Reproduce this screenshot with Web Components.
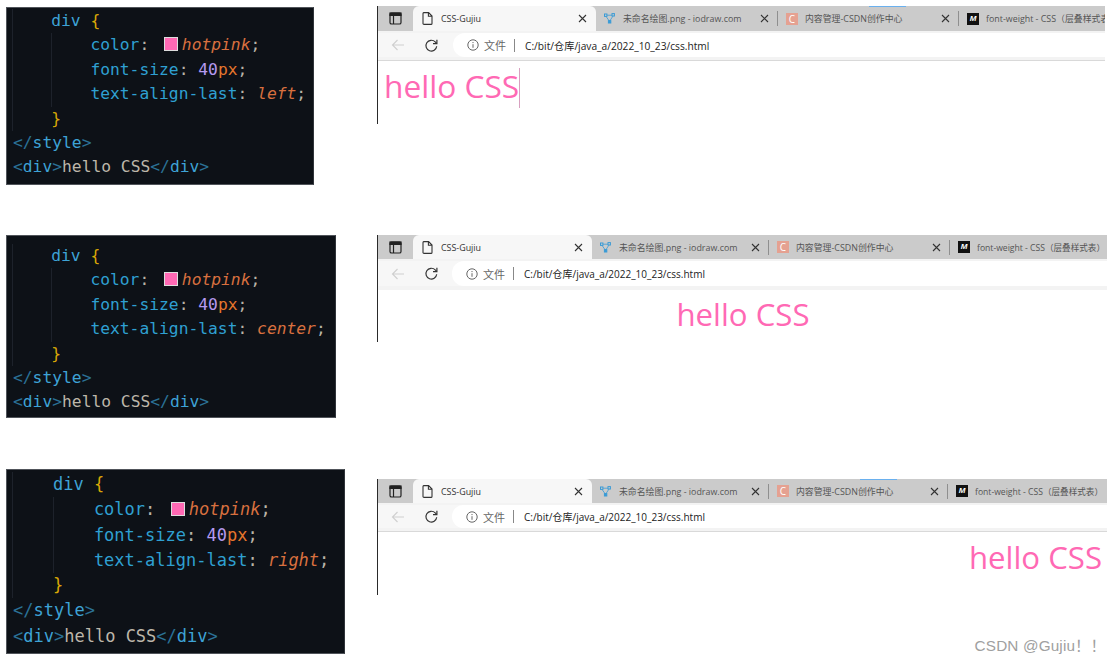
<!DOCTYPE html>
<html lang="zh">
<head>
<meta charset="utf-8">
<title>text-align-last</title>
<style>
  html, body { margin: 0; padding: 0; background: #fff; }
  body { width: 1117px; height: 665px; overflow: hidden; position: relative; }
</style>
</head>
<body>
<demo-row style="--row-h:235px;--pad:6px;--code-top:1px;--win-top:0px">
  <code-panel slot="code" value="left" style="--w:308px;--h:178px;--fs:16.3px;--lh:24.4px;--top:1px"></code-panel>
  <browser-window slot="win" style="--w:728px;--h:118px;--strip:25px;--bar:29px;--line:#d9d9d9;--pill-left:75px;--url:10.2px">
    <browser-tab slot="tabs" active icon="doc" style="--tw:183px">CSS-Gujiu</browser-tab>
    <browser-tab slot="tabs" icon="graph" sep style="--tw:182px">未命名绘图.png - iodraw.com</browser-tab>
    <browser-tab slot="tabs" icon="c" sep style="--tw:181px">内容管理-CSDN创作中心</browser-tab>
    <browser-tab slot="tabs" icon="m" style="--tw:147px">font-weight - CSS（层叠样式表）</browser-tab>
    <page-text align="left" caret style="--text-top:3px;--hello:31.7px">hello CSS</page-text>
    <load-bar slot="over" style="--x:491px"></load-bar>
  </browser-window>
</demo-row>
<demo-row style="--row-h:234px;--pad:0px;--code-top:0px;--win-top:0px">
  <code-panel slot="code" value="center" style="--w:330px;--h:183px;--fs:16.3px;--lh:24.4px;--top:8px"></code-panel>
  <browser-window slot="win" style="--w:730px;--h:107px;--strip:24px;--bar:30px;--line:#f3f3f3;--pill-left:74px;--url:10px">
    <browser-tab slot="tabs" active icon="doc" style="--tw:179px">CSS-Gujiu</browser-tab>
    <browser-tab slot="tabs" icon="graph" sep style="--tw:177px">未命名绘图.png - iodraw.com</browser-tab>
    <browser-tab slot="tabs" icon="c" sep style="--tw:181px">内容管理-CSDN创作中心</browser-tab>
    <browser-tab slot="tabs" icon="m" style="--tw:158px;font-size:8.6px">font-weight - CSS（层叠样式表）</browser-tab>
    <page-text align="center" style="--text-top:2px;--hello:31.2px">hello CSS</page-text>
  </browser-window>
</demo-row>
<demo-row style="--row-h:196px;--pad:0px;--code-top:0px;--win-top:10px">
  <code-panel slot="code" value="right" style="--w:339px;--h:185px;--fs:17px;--lh:25.3px;--top:2px"></code-panel>
  <browser-window slot="win" style="--w:730px;--h:116px;--strip:24px;--bar:28px;--line:#d9d9d9;--pill-left:74px;--url:10px">
    <browser-tab slot="tabs" active icon="doc" style="--tw:179px">CSS-Gujiu</browser-tab>
    <browser-tab slot="tabs" icon="graph" sep style="--tw:177px">未命名绘图.png - iodraw.com</browser-tab>
    <browser-tab slot="tabs" icon="c" sep style="--tw:179px">内容管理-CSDN创作中心</browser-tab>
    <browser-tab slot="tabs" icon="m" style="--tw:160px;font-size:8.6px">font-weight - CSS（层叠样式表）</browser-tab>
    <page-text align="right" style="--text-top:3px;--hello:31.2px">hello CSS</page-text>
    <load-bar slot="over" style="--x:482px"></load-bar>
  </browser-window>
</demo-row>
<csdn-mark>CSDN @Gujiu！！</csdn-mark>

<script>
const UI_FONT = `"Open Sans", "Noto Sans CJK SC", sans-serif`;

class DemoRow extends HTMLElement {
  constructor() {
    super();
    this.attachShadow({ mode: 'open' }).innerHTML = `
      <style>
        :host {
          display: grid;
          grid-template-columns: 377px 1fr;
          align-items: start;
          height: var(--row-h);
          padding-top: var(--pad);
          box-sizing: border-box;
        }
        .code { padding: var(--code-top) 0 0 6px; }
        .win { padding-top: var(--win-top); }
      </style>
      <div class="code"><slot name="code"></slot></div>
      <div class="win"><slot name="win"></slot></div>
    `;
  }
}

class CodePanel extends HTMLElement {
  constructor() {
    super();
    this.attachShadow({ mode: 'open' });
  }

  connectedCallback() {
    const value = this.getAttribute('value');
    this.shadowRoot.innerHTML = `
      <style>
        :host {
          display: block;
          box-sizing: border-box;
          width: var(--w);
          height: var(--h);
          padding: var(--top) 0 0 6px;
          background: #0d1117;
          border: 1px solid #50545a;
          border-right-color: #30343a;
          font: var(--fs)/var(--lh) "DejaVu Sans Mono", monospace;
          color: #bdb7aa;
          overflow: hidden;
        }
        .outer { border-left: 1px solid #1d222b; margin-left: -1px; }
        .outer > .ln { padding-left: calc(4ch - 1px); }
        .inner { margin-left: calc(4ch - 1px); border-left: 1px solid #1d222b; }
        .inner > .ln { padding-left: calc(4ch - 1px); }
        .ln { height: var(--lh); white-space: pre; }
        .tag { color: #3ea3d6; }
        .dim { color: #2b7196; }
        .prop { color: #2fa0d2; }
        .p { color: #b9b4a8; }
        .brace { color: #d9a706; }
        .val { color: #d8703f; font-style: italic; }
        .num { color: #b59af0; }
        .unit { color: #e5762c; }
        .swatch {
          display: inline-block;
          width: 12px;
          height: 12px;
          margin: 0 -6px 0 5px;
          background: hotpink;
          border: 1px solid #ddd;
          vertical-align: -1px;
        }
      </style>
      <div class="outer">
        <div class="ln"><span class="tag">div</span> <span class="brace">{</span></div>
        <div class="inner">
          <div class="ln"><span class="prop">color</span><span class="p">:</span> <span class="swatch"></span> <span class="val">hotpink</span><span class="p">;</span></div>
          <div class="ln"><span class="prop">font-size</span><span class="p">:</span> <span class="num">40</span><span class="unit">px</span><span class="p">;</span></div>
          <div class="ln"><span class="prop">text-align-last</span><span class="p">:</span> <span class="val">${value}</span><span class="p">;</span></div>
        </div>
        <div class="ln"><span class="brace">}</span></div>
      </div>
      <div class="ln"><span class="dim">&lt;/</span><span class="tag">style</span><span class="dim">&gt;</span></div>
      <div class="ln"><span class="dim">&lt;</span><span class="tag">div</span><span class="dim">&gt;</span>hello CSS<span class="dim">&lt;/</span><span class="tag">div</span><span class="dim">&gt;</span></div>
    `;
  }
}

class BrowserWindow extends HTMLElement {
  constructor() {
    super();
    this.attachShadow({ mode: 'open' }).innerHTML = `
      <style>
        :host {
          display: flex;
          flex-direction: column;
          position: relative;
          box-sizing: border-box;
          width: var(--w);
          height: var(--h);
          border-left: 1px solid #2a2a2a;
          background: #fff;
          font-family: ${UI_FONT};
          overflow: hidden;
        }
        .strip {
          display: flex;
          height: var(--strip);
          flex: none;
          background: #cbcbcb;
          overflow: hidden;
        }
        .side {
          flex: none;
          width: 35px;
          display: flex;
          align-items: center;
          justify-content: center;
        }
        .bar {
          flex: none;
          box-sizing: border-box;
          height: var(--bar);
          display: flex;
          align-items: stretch;
          background: #f7f7f7;
          border-top: 2px solid #f3f3f3;
          border-bottom: 3px solid #f3f3f3;
          box-shadow: 0 1px 0 var(--line);
          padding-left: 13px;
          font-size: 11px;
          color: #666;
          margin-bottom: 1px;
        }
        .nav { flex: none; display: flex; width: calc(var(--pill-left) - 13px); gap: 19px; align-items: center; }
        .pill {
          flex: 1;
          display: flex;
          align-items: center;
          background: #fff;
          border-radius: 12px 0 0 12px;
          padding-left: 14px;
        }
        .info { display: flex; align-items: center; gap: 5px; }
        .sep { width: 1px; height: 13px; background: #888; margin: 0 10px 0 8px; }
        .url { color: #222; font-size: var(--url); white-space: nowrap; }
        .page { flex: 1; min-height: 0; }
      </style>
      <div class="strip">
        <div class="side">
          <svg width="13" height="13" viewBox="0 0 13 13" fill="none" stroke="#222" stroke-width="1.2">
            <rect x="1" y="1" width="11" height="11" rx="1.6"/>
            <rect x="1" y="1" width="11" height="2.4" fill="#222"/>
            <path d="M4.5 3.4V12"/>
          </svg>
        </div>
        <slot name="tabs"></slot>
      </div>
      <div class="bar">
        <div class="nav">
          <svg width="14" height="12" viewBox="0 0 14 12" fill="none" stroke="#cfcfcf" stroke-width="1.1"><path d="M13 6H1.5M6.5 1L1.5 6l5 5"/></svg>
          <svg width="15" height="15" viewBox="0 0 15 15" fill="none" stroke="#333" stroke-width="1.2"><path d="M12.7 8.3a5.4 5.4 0 1 1-1.5-4.4l1.5 1.5"/><path d="M12.9 1.7v3.9H9"/></svg>
        </div>
        <div class="pill">
          <div class="info">
            <svg width="12" height="12" viewBox="0 0 12 12" fill="none" stroke="#666"><circle cx="6" cy="6" r="5.2"/><path d="M6 5.2v3.6M6 3v1.1"/></svg>
            <span>文件</span>
          </div>
          <span class="sep"></span>
          <span class="url">C:/bit/仓库/java_a/2022_10_23/css.html</span>
        </div>
      </div>
      <div class="page"><slot></slot></div>
      <slot name="over"></slot>
    `;
  }
}

class BrowserTab extends HTMLElement {
  static icons = {
    doc: `<svg width="11" height="13" viewBox="0 0 11 13" fill="none" stroke="#333" stroke-width="1.1"><path d="M1 1.5A1 1 0 0 1 2 .6h4.6L10 4v7.4a1 1 0 0 1-1 1H2a1 1 0 0 1-1-1zM6.4.8v3.4H10"/></svg>`,
    graph: `<svg width="11" height="11" viewBox="0 0 11 11" fill="#3a9bd6" stroke="#3a9bd6"><rect x=".5" y="1" width="2.4" height="2.4" fill="none"/><rect x="8" y=".6" width="2.4" height="2.4" fill="none"/><rect x="4.4" y="7.6" width="2.4" height="2.4"/><path d="M3 2.2h5M2 3.4l3 4.2M9 3l-3 4.6" fill="none" stroke-width=".8"/></svg>`,
    c: `<span class="ico c">C</span>`,
    m: `<span class="ico m">M</span>`,
  };

  constructor() {
    super();
    this.attachShadow({ mode: 'open' });
  }

  connectedCallback() {
    const name = this.getAttribute('icon');
    const icon = BrowserTab.icons[name];
    const showClose = name !== 'm';
    this.shadowRoot.innerHTML = `
      <style>
        :host {
          display: flex;
          align-items: center;
          flex: none;
          box-sizing: border-box;
          width: var(--tw);
          padding: 0 ${showClose ? 8 : 0}px 0 8px;
          font-size: 8.9px;
          color: #555;
          white-space: nowrap;
          overflow: hidden;
        }
        :host([active]) {
          background: #f7f7f7;
          border-radius: 6px 6px 0 0;
          color: #333;
          padding: 0 1px 0 9px;
        }
        .icon { flex: none; width: 15px; display: flex; align-items: center; margin-right: 4px; }
        .icon svg { display: block; }
        .ico {
          display: block;
          width: 12px;
          height: 12px;
          text-align: center;
          line-height: 12px;
        }
        .c { background: #e5a191; color: #fff; font: 10px/12px "Open Sans", sans-serif; }
        .m { background: #111; color: #fff; font: italic bold 8px/12px "Liberation Sans", sans-serif; }
        .title { flex: 1; min-width: 0; overflow: hidden; }
        .x { flex: none; margin-right: 8px; }
        .divider { flex: none; width: 1px; height: 15px; background: #8f8f8f; margin-right: -8px; }
      </style>
      <span class="icon">${icon}</span>
      <span class="title"><slot></slot></span>
      ${showClose ? `<svg class="x" width="9" height="9" viewBox="0 0 9 9" stroke="#333" stroke-width="1.1"><path d="M1 1l7 7M8 1L1 8"/></svg>` : ''}
      ${this.hasAttribute('sep') ? `<span class="divider"></span>` : ''}
    `;
  }
}

class PageText extends HTMLElement {
  constructor() {
    super();
    this.attachShadow({ mode: 'open' });
  }

  connectedCallback() {
    this.shadowRoot.innerHTML = `
      <style>
        :host {
          display: block;
          padding: var(--text-top) 5px 0 6px;
          text-align: ${this.getAttribute('align')};
          color: hotpink;
          font: var(--hello)/44px "Open Sans", sans-serif;
          white-space: nowrap;
        }
        .caret { display: inline-block; width: 1px; height: 40px; background: #d8a0c0; vertical-align: -10px; }
      </style>
      <slot></slot>${this.hasAttribute('caret') ? '<span class="caret"></span>' : ''}
    `;
  }
}

class LoadBar extends HTMLElement {
  constructor() {
    super();
    this.attachShadow({ mode: 'open' }).innerHTML = `
      <style>
        :host {
          position: absolute;
          top: 0;
          left: var(--x);
          width: 37px;
          height: 1px;
          background: #6ab0ee;
        }
      </style>
    `;
  }
}

class CsdnMark extends HTMLElement {
  constructor() {
    super();
    this.attachShadow({ mode: 'open' }).innerHTML = `
      <style>
        :host {
          position: absolute;
          right: 11px;
          top: 637px;
          color: #a0a0a0;
          font: 15.3px/18px "Liberation Sans", "Noto Sans CJK SC", sans-serif;
          letter-spacing: .15px;
          white-space: nowrap;
        }
      </style>
      <slot></slot>
    `;
  }
}

customElements.define('demo-row', DemoRow);
customElements.define('code-panel', CodePanel);
customElements.define('browser-window', BrowserWindow);
customElements.define('browser-tab', BrowserTab);
customElements.define('page-text', PageText);
customElements.define('load-bar', LoadBar);
customElements.define('csdn-mark', CsdnMark);
</script>
</body>
</html>
